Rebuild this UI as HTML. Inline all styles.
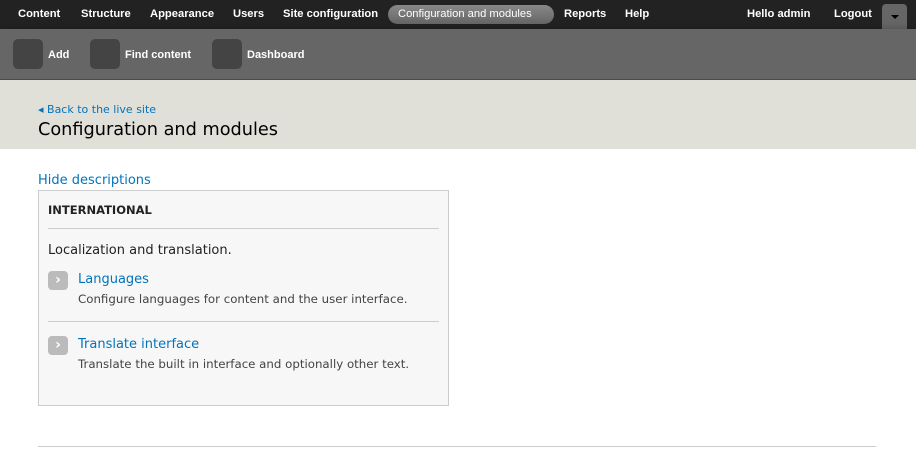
<!DOCTYPE html><html><head><style>
body{margin:0;width:916px;height:468px;overflow:hidden;background:#fff;font-family:"DejaVu Sans",sans-serif;position:relative}
.a{position:absolute;white-space:nowrap}
#top{position:absolute;left:0;top:0;width:916px;height:29px;background:#222}
.t{position:absolute;top:8px;font:bold 11.2px "Liberation Sans",sans-serif;color:#fff}
#sc{position:absolute;left:0;top:29px;width:916px;height:50px;background:#666;border-bottom:1px solid #4a4a4a;box-shadow:0 3px 9px rgba(0,0,0,.55)}
.sq{position:absolute;top:10px;width:30px;height:30px;background:#444;border-radius:5px}
.s{position:absolute;top:20px;font:bold 11px "Liberation Sans",sans-serif;color:#fff}
#hd{position:absolute;left:0;top:80px;width:916px;height:69px;background:#e0e0d8}
a,.l{color:#0074bd;text-decoration:none}
.ic{position:absolute;left:48px;width:20px;height:19px;background:#bbb;border-radius:4px;color:#fff;font-size:14px;font-weight:bold;text-align:center;line-height:18px}
</style></head><body>
<div id="top">
<span class="t" style="left:18px">Content</span>
<span class="t" style="left:81px">Structure</span>
<span class="t" style="left:150px">Appearance</span>
<span class="t" style="left:233px">Users</span>
<span class="t" style="left:283px">Site configuration</span>
<div style="position:absolute;left:388px;top:5px;width:166px;height:19px;border-radius:10px;background:linear-gradient(#888,#666)"></div>
<span class="t" style="left:398px;font-weight:normal">Configuration and modules</span>
<span class="t" style="left:564px">Reports</span>
<span class="t" style="left:625px">Help</span>
<span class="t" style="left:747px">Hello admin</span>
<span class="t" style="left:834px">Logout</span>
<div style="position:absolute;left:882px;top:4px;width:25px;height:25px;background:#666;border-radius:4px 4px 0 0"></div>
<div style="position:absolute;left:891px;top:15px;border:4px solid transparent;border-top:4px solid #000;border-bottom:0"></div>
</div>
<div id="sc">
<div class="sq" style="left:13px"></div><span class="s" style="left:48px">Add</span>
<div class="sq" style="left:90px"></div><span class="s" style="left:125px">Find content</span>
<div class="sq" style="left:212px"></div><span class="s" style="left:247px">Dashboard</span>
</div>
<div id="hd"></div>
<div class="a l" style="left:38px;top:103px;font-size:11px">◂ Back to the live site</div>
<div class="a" style="left:38px;top:120px;font-size:17.7px;color:#000">Configuration and modules</div>
<div class="a l" style="left:38px;top:173px;font-size:13px">Hide descriptions</div>
<div style="position:absolute;left:38px;top:190px;width:409px;height:214px;border:1px solid #ccc;background:#f7f7f7"></div>
<div class="a" style="left:48px;top:203px;font-size:11.5px;font-weight:bold;color:#222">INTERNATIONAL</div>
<div style="position:absolute;left:48px;top:228px;width:391px;height:1px;background:#ccc"></div>
<div class="a" style="left:48px;top:243px;font-size:13px;color:#222">Localization and translation.</div>
<div class="ic" style="top:271px">›</div>
<div class="a l" style="left:78px;top:272px;font-size:13px">Languages</div>
<div class="a" style="left:78px;top:292px;font-size:11.8px;color:#444">Configure languages for content and the user interface.</div>
<div style="position:absolute;left:48px;top:321px;width:391px;height:1px;background:#ccc"></div>
<div class="ic" style="top:336px">›</div>
<div class="a l" style="left:78px;top:337px;font-size:13px">Translate interface</div>
<div class="a" style="left:78px;top:357px;font-size:11.8px;color:#444">Translate the built in interface and optionally other text.</div>
<div style="position:absolute;left:38px;top:446px;width:838px;height:1px;background:#ccc"></div>
</body></html>
